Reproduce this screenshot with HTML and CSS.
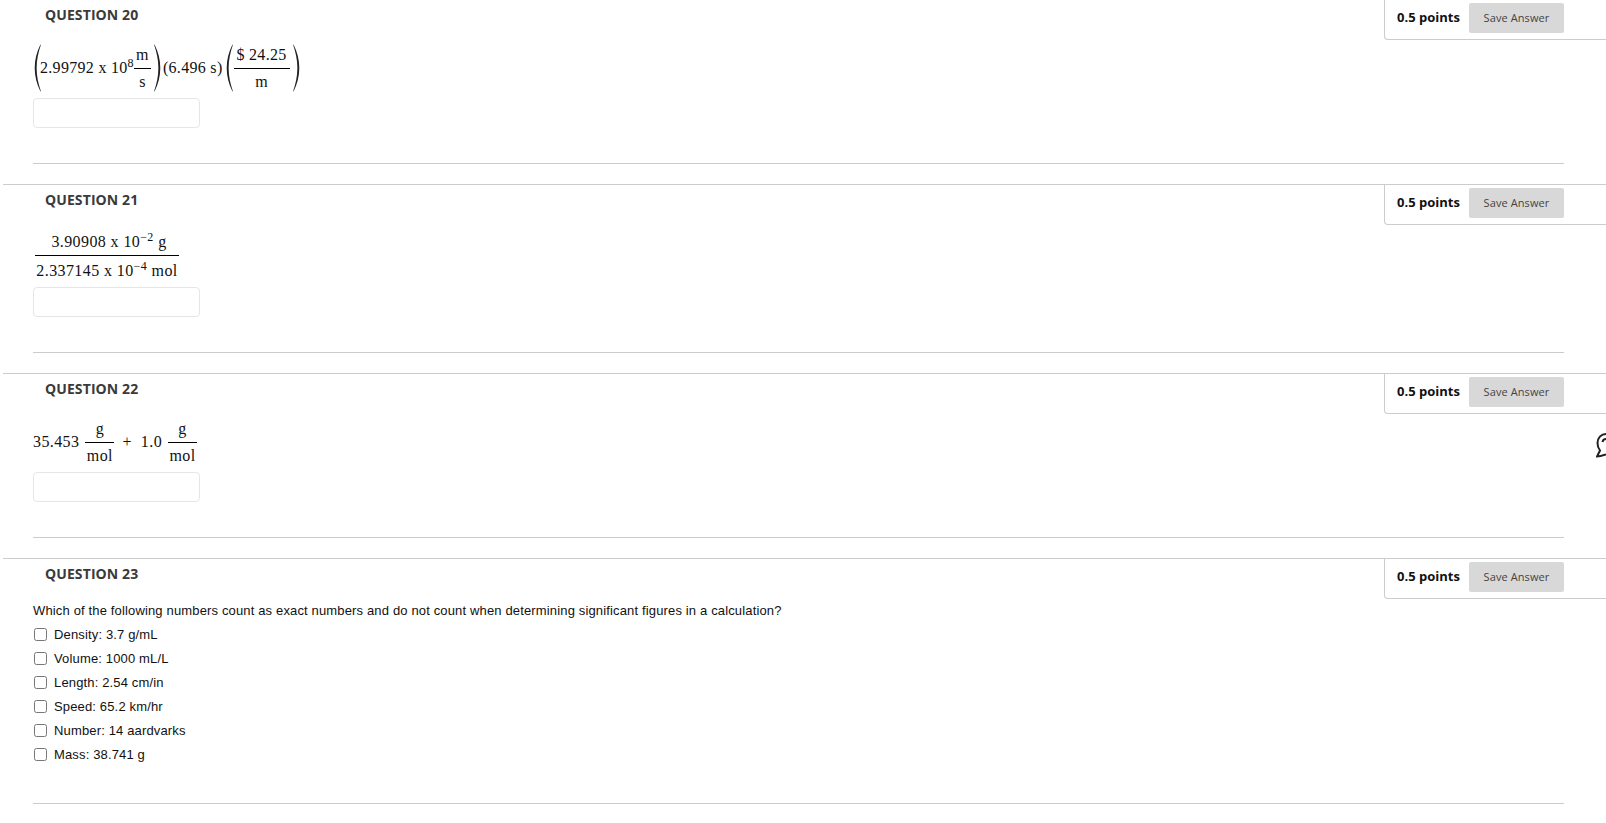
FILE: index.html
```html
<!DOCTYPE html>
<html>
<head>
   <title>Questions</title>
   <meta charset="utf-8">
   <link rel="stylesheet" href="styles.css">
</head>
<body>
   <svg class="defs" width="0" height="0">
      <symbol id="paren" viewBox="0 0 8 48" preserveAspectRatio="none">
         <path d="M7.400 .6C3 8 .8 16 .8 24S3 40 7.400 47.400L7.800 47C5 40 3 32 3 24S5 8 7.800 1Z"/>
      </symbol>
   </svg>

   <section class="question question-first">
      <header class="question-head">
         <h2 class="question-title">QUESTION 20</h2>
         <div class="points-box"><span class="points">0.5 points</span><button class="save-btn">Save Answer</button></div>
      </header>
      <div class="question-body">
         <div class="math math-q20">
            <svg class="paren paren-first"><use href="#paren"/></svg>
            <span class="term">2.99792 x 10<sup>8</sup></span>
            <span class="frac frac-units"><span class="num">m</span><span class="den">s</span></span>
            <svg class="paren paren-close"><use href="#paren"/></svg>
            <span class="term term-time">(6.496 s)</span>
            <svg class="paren paren-gap"><use href="#paren"/></svg>
            <span class="frac frac-cost"><span class="num">$ 24.25</span><span class="den">m</span></span>
            <svg class="paren paren-close"><use href="#paren"/></svg>
         </div>
         <input class="answer" type="text">
         <hr class="rule">
      </div>
   </section>

   <section class="question">
      <header class="question-head">
         <h2 class="question-title">QUESTION 21</h2>
         <div class="points-box"><span class="points">0.5 points</span><button class="save-btn">Save Answer</button></div>
      </header>
      <div class="question-body">
         <div class="math math-tall">
            <span class="frac frac-wide">
               <span class="num">3.90908 x 10<sup>&minus;2</sup> g</span>
               <span class="den">2.337145 x 10<sup>&minus;4</sup> mol</span>
            </span>
         </div>
         <input class="answer" type="text">
         <hr class="rule">
      </div>
   </section>

   <section class="question">
      <header class="question-head">
         <h2 class="question-title">QUESTION 22</h2>
         <div class="points-box"><span class="points">0.5 points</span><button class="save-btn">Save Answer</button></div>
      </header>
      <div class="question-body">
         <div class="math math-sum">
            <span class="term">35.453</span>
            <span class="frac frac-mol"><span class="num">g</span><span class="den">mol</span></span>
            <span class="term term-plus">+</span>
            <span class="term">1.0</span>
            <span class="frac frac-mol"><span class="num">g</span><span class="den">mol</span></span>
         </div>
         <input class="answer" type="text">
         <hr class="rule">
      </div>
   </section>

   <section class="question">
      <header class="question-head">
         <h2 class="question-title">QUESTION 23</h2>
         <div class="points-box"><span class="points">0.5 points</span><button class="save-btn">Save Answer</button></div>
      </header>
      <div class="question-body">
         <p class="prompt">Which of the following numbers count as exact numbers and do not count when determining significant figures in a calculation?</p>
         <label class="option"><input type="checkbox">Density: 3.7 g/mL</label>
         <label class="option"><input type="checkbox">Volume: 1000 mL/L</label>
         <label class="option"><input type="checkbox">Length: 2.54 cm/in</label>
         <label class="option"><input type="checkbox">Speed: 65.2 km/hr</label>
         <label class="option"><input type="checkbox">Number: 14 aardvarks</label>
         <label class="option"><input type="checkbox">Mass: 38.741 g</label>
         <hr class="rule rule-last">
      </div>
   </section>

   <svg class="chat-icon" width="10" height="26" viewBox="0 0 10 26" fill="none" stroke="#222" stroke-width="2">
      <path d="M10 1C5 1 1.500 5 1.500 10C1.500 13 2.500 15.500 4 17.500L1 23.500C4 23.500 7 22.500 10 21.500"/>
      <path d="M6.500 9C6.800 7 8 6 10 6"/>
   </svg>
</body>
</html>
```

FILE: styles.css
```css
html, body { margin: 0; padding: 0; height: 100%; overflow: hidden; }

body {
  position: relative;
  background: #fff;
  color: #111;
  font-family: "Liberation Sans", Arial, sans-serif;
}

.defs { position: absolute; }

.question {
  margin-left: 3px;
  border-top: 1px solid #ccc;
}
.question-first { border-top: 0; }

.question-head {
  display: flex;
  justify-content: space-between;
  height: 40px;
}

.question-title {
  margin: 0;
  padding: 5px 0 0 42px;
  font: 700 14px/19px "Open Sans", sans-serif;
  letter-spacing: .1px;
  color: #3a3a3a;
}

.points-box {
  display: flex;
  align-items: flex-start;
  box-sizing: border-box;
  width: 222px;
  height: 40px;
  padding: 3px 42px 0 12px;
  border-left: 1px solid #ccc;
  border-bottom: 1px solid #ccc;
  border-bottom-left-radius: 4px;
  justify-content: space-between;
}

.points {
  font: 700 13px/29px "Open Sans", sans-serif;
  color: #111;
}

.save-btn {
  width: 95px;
  height: 30px;
  padding: 0 0 2px;
  border: 0;
  border-radius: 2px;
  background: #d8d8d8;
  color: #444;
  font: 400 11px "Open Sans", sans-serif;
  letter-spacing: .1px;
}

.question-body { padding: 0 42px 0 30px; }

.math {
  display: flex;
  align-items: center;
  height: 52px;
  margin: 2px 0 4px;
  font: 16px/18px "Liberation Serif", "Times New Roman", serif;
  letter-spacing: .4px;
  color: #111;
}
.math-q20 { letter-spacing: .3px; }
.math-tall { height: 56px; margin: 3px 0; }

.term { white-space: nowrap; }
.term sup { font-size: 12px; line-height: 0; }

.frac {
  display: flex;
  flex-direction: column;
  align-items: center;
  white-space: nowrap;
}
.frac sup { font-size: 12px; line-height: 0; }
.frac .num { padding-bottom: 4px; border-bottom: 1px solid #000; align-self: stretch; text-align: center; }
.frac .den { padding-top: 4px; }
.frac-wide .num { padding-left: 4px; box-sizing: border-box; }
.frac-wide .den { padding-top: 6px; }

.frac-units { width: 17px; margin: 0 2px 0 0; }
.frac-cost { width: 56px; margin: 0 2px 0 1px; }
.frac-mol { width: 29px; margin: 0 6px; }
.frac-wide { width: 144px; margin-left: 2px; }

.paren {
  flex: none;
  width: 7px;
  height: 48px;
  margin-left: 1px;
  fill: #222;
}
.paren-first { margin-right: -1px; }
.paren-close { transform: scaleX(-1); }
.paren-gap { margin-left: 3px; }

.term-time { margin-left: 2px; }
.term-plus { margin: 0 9px 0 2px; }

.answer {
  display: block;
  box-sizing: border-box;
  width: 167px;
  height: 30px;
  margin: 0;
  padding: 0;
  border: 1px solid #e6e6e6;
  border-radius: 4px;
  background: #fff;
}

.rule {
  height: 0;
  margin: 35px 0 20px;
  border: 0;
  border-top: 1px solid #ccc;
}
.rule-last { margin-top: 36px; }

.prompt {
  margin: 0;
  font-size: 13px;
  line-height: 24px;
  letter-spacing: .15px;
  color: #111;
}

.option {
  display: flex;
  align-items: center;
  box-sizing: border-box;
  height: 24px;
  padding-bottom: 2px;
  font-size: 13px;
  letter-spacing: .15px;
  color: #111;
}
.option input { margin: 0 7px 0 1px; }

.chat-icon {
  position: absolute;
  top: 433px;
  right: 0;
}
```
